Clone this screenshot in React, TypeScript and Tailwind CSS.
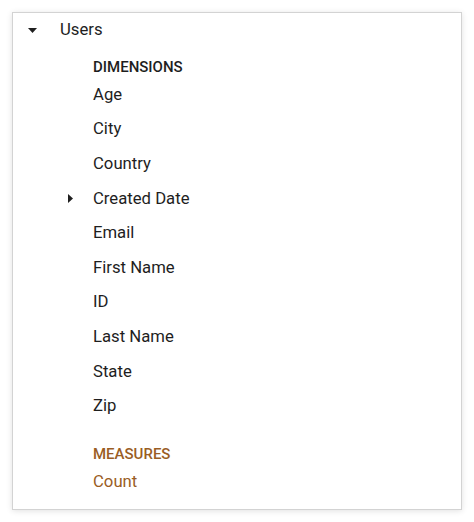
import React from 'react';

const dimensions = ['Age', 'City', 'Country', 'Created Date', 'Email', 'First Name', 'ID', 'Last Name', 'State', 'Zip'];
const measures = ['Count'];

const CaretDown = () => (
  <svg width="9" height="5" viewBox="0 0 9 5" className="block">
    <path d="M0 0h9L4.5 5z" fill="#1f1f1f" />
  </svg>
);

const CaretRight = () => (
  <svg width="5" height="9" viewBox="0 0 5 9" className="block">
    <path d="M0 0v9l5-4.5z" fill="#1f1f1f" />
  </svg>
);

const FieldRow: React.FC<{ label: string; expandable?: boolean; measure?: boolean }> = ({ label, expandable, measure }) => (
  <div className="flex items-center h-[34.6px]">
    <div className="w-[80px] flex justify-end pr-[20px]">{expandable && <CaretRight />}</div>
    <span className={measure ? 'text-[#9a5d24]' : 'text-[#1e1e1e]'}>{label}</span>
  </div>
);

export default function App() {
  return (
    <div className="min-h-[522px] bg-white p-[12px]" style={{ fontFamily: 'Roboto, "Liberation Sans", sans-serif' }}>
      <div className="w-[450px] h-[498px] border border-[#d3d3d3] bg-white shadow-[0_1px_6px_rgba(0,0,0,0.12)] text-[16.7px]">
        <div className="flex items-center h-[34px]">
          <div className="w-[47px] pl-[15px]">
            <CaretDown />
          </div>
          <span className="text-[#1e1e1e]">Users</span>
        </div>

        <div className="mt-[10px] h-[20px] flex items-center pl-[80px] text-[15px] font-medium text-[#1e1e1e]">DIMENSIONS</div>
        {dimensions.map((d) => (
          <FieldRow key={d} label={d} expandable={d === 'Created Date'} />
        ))}

        <div className="mt-[21px] h-[20px] flex items-center pl-[80px] text-[15px] font-medium text-[#9a5d24]">MEASURES</div>
        {measures.map((m) => (
          <FieldRow key={m} label={m} measure />
        ))}
      </div>
    </div>
  );
}
